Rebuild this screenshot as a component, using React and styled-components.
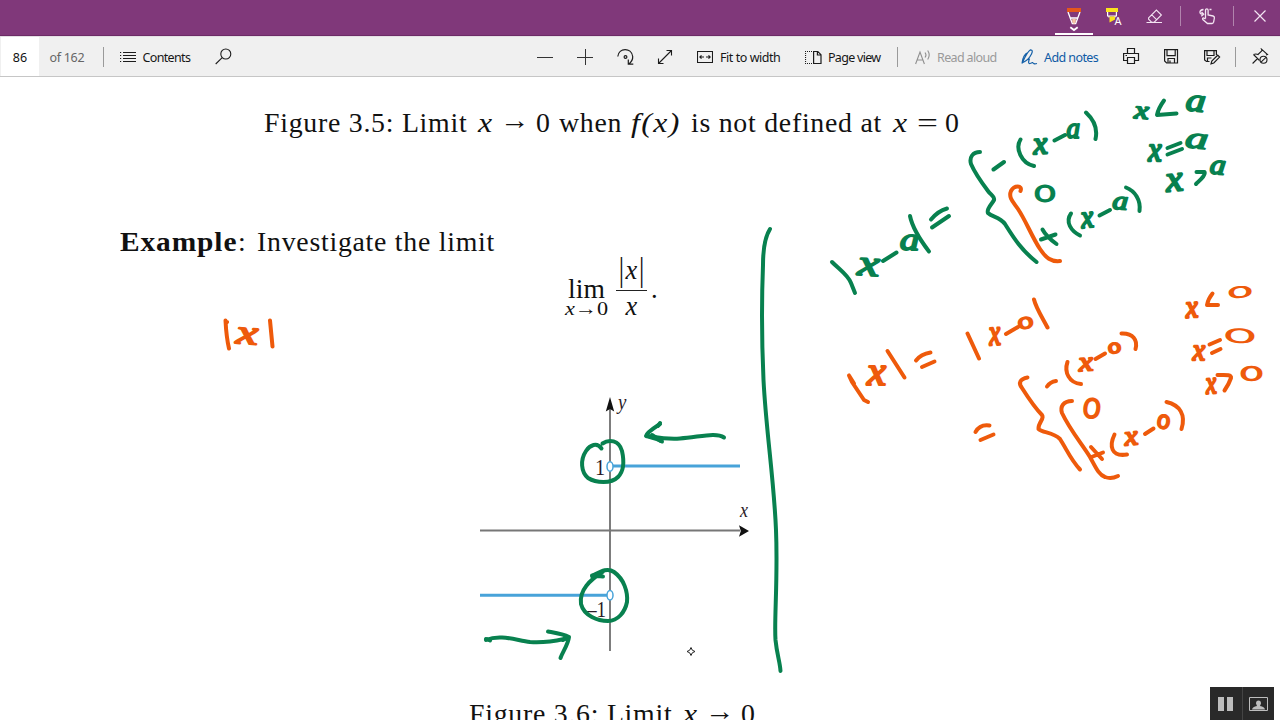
import React from 'react';
import styled, {createGlobalStyle} from 'styled-components';

const GREEN = '#08814f';
const ORANGE = '#ee5a0b';

const GlobalStyle = createGlobalStyle`
  body {
    margin: 0;
    background: #fff;
  }
`;

const Screen = styled.div`
  position: relative;
  display: flex;
  flex-direction: column;
  width: 1280px;
  height: 720px;
  overflow: hidden;
  background: #fff;
  font-family: 'Noto Sans', 'Open Sans', sans-serif;
`;

const InkBar = styled.div`
  box-sizing: border-box;
  flex: none;
  display: flex;
  justify-content: flex-end;
  height: 36px;
  padding-right: 5px;
  background: #80387a;
  border-bottom: 1px solid #6c2b66;
`;

const InkTool = styled.div`
  box-sizing: border-box;
  display: flex;
  justify-content: center;
  width: ${p => p.$width || 40}px;
  height: 35px;
  padding-top: 7px;
`;

const ActiveTool = styled(InkTool)`
  border-bottom: 2px solid #fff;
`;

const InkDivider = styled.div`
  width: 1px;
  height: 20px;
  margin-top: 6px;
  background: #b184ad;
`;

const Toolbar = styled.div`
  box-sizing: border-box;
  flex: none;
  display: flex;
  align-items: center;
  height: 41px;
  background: #f0f0f0;
  border-top: 1px solid #e4dfe4;
  border-bottom: 1px solid #c6c6c6;
`;

const PageField = styled.div`
  width: 38px;
  margin-left: 1px;
  height: 39px;
  line-height: 41px;
  text-align: center;
  background: #fff;
  color: #111;
  font-size: 12.5px;
`;

const Slot = styled.div`
  flex: none;
  display: flex;
  align-items: center;
  width: ${p => p.$width}px;
  margin-left: ${p => p.$gap || 0}px;
`;

const Label = styled(Slot)`
  padding-top: 1px;
  white-space: nowrap;
  font-size: 12.5px;
  letter-spacing: ${p => p.$spacing || -0.6}px;
  color: ${p => p.$color || '#161616'};
`;

const Divider = styled.div`
  flex: none;
  width: 1px;
  height: 20px;
  margin-left: ${p => p.$gap}px;
  background: #9a9a9a;
`;

const Page = styled.main`
  flex: 1;
  display: flex;
  flex-direction: column;
  overflow: hidden;
  color: #111;
  font-family: 'Liberation Serif', serif;
  font-size: 26.5px;
  line-height: 30px;
`;

const Line = styled.div`
  flex: none;
  display: flex;
  height: 30px;
  margin-top: ${p => p.$top}px;
  padding-left: ${p => p.$left}px;
  white-space: nowrap;
`;

const Words = styled.span`
  flex: none;
  width: ${p => p.$width}px;
  letter-spacing: 0.7px;
  transform: scaleX(1.05);
  transform-origin: left;
`;

const Strong = styled(Words)`
  font-weight: bold;
  letter-spacing: 0.8px;
  transform: scaleX(1.11);
`;

const MathText = styled(Words)`
  font-style: ${p => (p.$upright ? 'normal' : 'italic')};
  letter-spacing: ${p => p.$spacing || 0}px;
  transform: scaleX(${p => p.$stretch || 1.2});
`;

const Arrow = styled(MathText)`
  height: 24px;
  line-height: 24px;
`;

const Formula = styled.div`
  flex: none;
  display: flex;
  height: 66px;
  padding-left: 565px;
`;

const Limit = styled.div`
  width: 51px;
  padding-top: 21px;
`;

const LimitName = styled.div`
  height: 22px;
  line-height: 22px;
  padding-left: 3px;
  transform: scaleX(1.04);
  transform-origin: left;
`;

const LimitUnder = styled.div`
  height: 18px;
  font-size: 19px;
  line-height: 18px;
  white-space: nowrap;
  transform: scaleX(1.17);
  transform-origin: left;
`;

const Fraction = styled.div`
  width: 31px;
  text-align: center;
  font-style: italic;
`;

const Numerator = styled.div`
  height: 33px;
  line-height: 27px;
  border-bottom: 1px solid #222;
`;

const Bar = styled.span`
  display: inline-block;
  font-style: normal;
  margin: 0 1.5px;
  transform: scaleY(1.25);
`;

const Period = styled.div`
  padding: 17px 0 0 4px;
`;

const Figure = styled.div`
  flex: none;
  height: 270px;
  margin-top: 66px;
  padding-left: 470px;
`;

const Plot = styled.svg`
  display: block;
`;

const InkLayer = styled.svg`
  position: absolute;
  top: 0;
  left: 0;
  pointer-events: none;
`;

const InkText = styled.text`
  stroke-linejoin: round;
  vector-effect: non-scaling-stroke;
`;

const Recorder = styled.div`
  position: absolute;
  right: 6px;
  bottom: 0;
  display: flex;
  width: 64px;
  height: 33px;
  background: #292929;
`;

const RecorderButton = styled.div`
  box-sizing: border-box;
  width: 32px;
  padding: 10px 0 0 ${p => p.$left}px;
  line-height: 0;
  & + & {
    border-left: 1px solid #444;
  }
`;

const Icon = ({w = 16, h = 16, color = '#1c1c1c', weight = 1, children}) => (
  <svg width={w} height={h} viewBox={`0 0 ${w} ${h}`} fill="none" stroke={color} strokeWidth={weight}>
    {children}
  </svg>
);

const InkTools = () => (
  <InkBar>
    <ActiveTool $width={38}>
      <Icon w={16} h={25} color="#fff" weight={1.3}>
        <path d="M2 5 6.3 16.5H9.7L14 5M4 11h8" />
        <path d="M1 1h14v4H1z" fill="#e4571b" stroke="none" />
        <path d="M6.2 12h3.6v2.5L8 17.5l-1.8-3z" fill="#f6c6a4" stroke="none" />
        <path d="M4.3 20.2l3.7 2.8 3.7-2.8" strokeWidth="1.8" />
      </Icon>
    </ActiveTool>
    <InkTool $width={42}>
      <Icon w={18} h={20} color="#fff" weight={1.2}>
        <path d="M1 1h12v4H1z" fill="#fbe31c" stroke="none" />
        <path d="M2.6 5v4h8.8V5M4 9v1.5M10 9v1.5" />
        <path d="M4.5 9.5h5.5v3l-5.500 3z" fill="#fbe31c" stroke="none" />
        <text x="9.5" y="17.5" fontSize="11" fontFamily="Noto Sans" fill="#fff" stroke="none">A</text>
      </Icon>
    </InkTool>
    <InkTool $width={38}>
      <Icon w={17} h={18} color="#f3e4f2" weight={1.1}>
        <path d="M2.6 10.8 10.4 3 15.4 8 8 15.4H5.8L2.6 12.2zM5.8 7.8l5 5M.5 15.5h15.500" />
      </Icon>
    </InkTool>
    <Slot $width={7} />
    <InkDivider />
    <InkTool $width={52}>
      <Icon w={19} h={18} color="#f3e4f2" weight={1.3}>
        <path d="M7.5 11.5V3.2a1.3 1.3 0 0 1 2.6 0V8l5 1q1.5.4 1.3 2l-.8 4.200q-.3 1.3-1.5 1.3H9.5L4.8 12.5q-.7-1.3.7-1.5l2 1" />
        <path d="M13.5 2.5h-2M5.5 2.5C1 3 .5 7 5.500 7.3M3.5 5l2.200 2.3-2.400 2" />
      </Icon>
    </InkTool>
    <InkDivider />
    <InkTool $width={41}>
      <Slot $width={10} />
      <Icon w={12} h={18} color="#f3e4f2" weight={1.2}>
        <path d="M.5 3.5l11 11M11.5 3.5l-11 11" />
      </Icon>
    </InkTool>
  </InkBar>
);

const ReaderToolbar = () => (
  <Toolbar>
    <PageField>86</PageField>
    <Label $gap={10.5} $width={41.5} $color="#666" $spacing={-0.3}>of 162</Label>
    <Divider $gap={12} />
    <Slot $gap={16} $width={16}>
      <Icon>
        <path d="M3 3.5h13M3 6.5h13M3 9.5h13M3 12.5h13" />
        <path d="M0 3.5h1.2M0 6.5h1.2M0 9.5h1.2M0 12.5h1.2" />
      </Icon>
    </Slot>
    <Label $gap={6.5} $width={48.5} $spacing={-0.65}>Contents</Label>
    <Slot $gap={24} $width={17}>
      <Icon w={17} h={17} weight={1.1}>
        <circle cx="10.8" cy="6" r="5" />
        <path d="M7.2 9.6.7 16" />
      </Icon>
    </Slot>
    <Slot $gap={305} $width={16}>
      <Icon color="#333"><path d="M0 8.5h16" /></Icon>
    </Slot>
    <Slot $gap={24} $width={16}>
      <Icon color="#333"><path d="M0 8.5h16M8.5 0v16" /></Icon>
    </Slot>
    <Slot $gap={24} $width={18}>
      <Icon w={18} h={18} weight={1.2}>
        <path d="M.8 8.5C1.5 -.5 14.5 -1 15.7 8.5Q16 12.5 12 16M11.3 11.5v4.7h5" />
        <circle cx="8.5" cy="9" r="1.4" />
      </Icon>
    </Slot>
    <Slot $gap={22} $width={16}>
      <Icon weight={1.1}>
        <path d="M1.5 14.5l13-13M9.5 1.5h5v5M1.5 9.5v5h5" />
      </Icon>
    </Slot>
    <Slot $gap={24} $width={16}>
      <Icon w={16} h={14} weight={1.1}>
        <path d="M.5 1.5h15v11H.5zM3 7h4M9 7h4M4.5 5.3 2.8 7l1.7 1.7M11.5 5.3 13.2 7l-1.7 1.7" />
      </Icon>
    </Slot>
    <Label $gap={7} $width={61} $spacing={-0.45}>Fit to width</Label>
    <Slot $gap={24} $width={17}>
      <Icon w={17} h={16} weight={1.2}>
        <path d="M8.6 2.5h4.2l3.2 3.2v8.8H8.6zM12.4 2.5V6H16" />
        <path d="M7 2.5H.5v12H7" strokeDasharray="1 1" />
      </Icon>
    </Slot>
    <Label $gap={6} $width={54} $spacing={-0.7}>Page view</Label>
    <Divider $gap={15} />
    <Slot $gap={17} $width={17}>
      <Icon w={17} h={16} color="#8f8f8f" weight={1.1}>
        <path d="M.6 15 5 3l4.4 12M2.2 11h5.7M10 3.5q2 2.5 0 5M12.7 1.5q3 4.5 0 9" />
      </Icon>
    </Slot>
    <Label $gap={5} $width={60} $color="#9a9a9a" $spacing={-0.65}>Read aloud</Label>
    <Slot $gap={24} $width={17}>
      <Icon w={17} h={16} color="#1560a8" weight={1.2}>
        <path d="M1 14.5C3 10 6 3 9.5.8Q12.5 1 10.5 5C8.5 9 5.5 12 2 13.5M7 3.5C3.5 5 1.5 9 1 14.5M8.5 9.5Q6.5 15 9 14.5T11.5 13Q12 15.5 16 14.5" />
      </Icon>
    </Slot>
    <Label $gap={6} $width={55} $color="#0f5aa5" $spacing={-0.58}>Add notes</Label>
    <Slot $gap={24} $width={17}>
      <Icon w={17} h={17} weight={1.2}>
        <path d="M4.5 5.5v-5h7v5M4 12.5H.6v-7h14.9v7H12M4.5 9.5h7v6h-7zM2.5 7.5h1.5" />
      </Icon>
    </Slot>
    <Slot $gap={24} $width={15}>
      <Icon w={15} h={15} weight={1.2}>
        <path d="M.6 .6h12.9v13.4H2.6L.6 12zM3 .6v6h8.2v-6M4 14v-4.5h6.5V14M6 11.5V14" />
      </Icon>
    </Slot>
    <Slot $gap={25} $width={17}>
      <Icon w={17} h={16} weight={1.2}>
        <path d="M5.5 12.5H2.5L.6 11V1.6h11.8V6M3 1.6v4.9h7V1.6M3.5 12.5v-3.5h4" />
        <path d="M7 14.8l.8-2.8 5.9-5.8 1.9 1.9-5.8 5.9z" />
      </Icon>
    </Slot>
    <Divider $gap={14} />
    <Slot $gap={16} $width={17}>
      <Icon w={17} h={17} weight={1.1}>
        <path d="M.6 15.5l5-5M1.5 6.5l6 6M1.5 6.5q2.5-1 4.5 0l4-3.8-.5-1.5L15.5 6.5l-1.5.5" />
        <circle cx="11.5" cy="11.8" r="3.5" />
        <path d="M9 14.2l5-4.8" />
      </Icon>
    </Slot>
  </Toolbar>
);

// Step function graph of |x| / x
const Graph = () => (
  <Plot width="290" height="270" viewBox="470 389 290 270">
    <path d="M610 408V651M480 530.5H740" stroke="#777" strokeWidth="1.9" />
    <path d="M610 397l4.2 14.5-4.2-2.5-4.2 2.5zM749 531l-10-5.8 1.8 5.8-1.8 5.8z" fill="#111" />
    <path d="M613 466H740M480 595.3H607" stroke="#48a3d9" strokeWidth="3" />
    <ellipse cx="610" cy="466.5" rx="3" ry="4.7" fill="#fff" stroke="#48a3d9" strokeWidth="1.5" />
    <ellipse cx="610" cy="595.3" rx="3" ry="4.7" fill="#fff" stroke="#48a3d9" strokeWidth="1.5" />
    <g fontFamily="Liberation Serif" fill="#2b1c28">
      <text transform="translate(618 408.5) scale(.9 1)" fontSize="21" fontStyle="italic">y</text>
      <text transform="translate(740 517) scale(.9 1)" fontSize="20" fontStyle="italic">x</text>
      <text transform="translate(595 474.5) scale(.85 1)" fontSize="24">1</text>
      <text transform="translate(587 616.5) scale(.8 1)" fontSize="24">–1</text>
    </g>
  </Plot>
);

// em boxes of the written characters: left, bottom, width, height
const shapes = {
  x: {font: 'Liberation Serif', style: 'italic', box: [-0.02, 0, 0.46, 0.43], pen: 2.2},
  a: {font: 'Liberation Serif', style: 'italic', box: [0.02, -0.01, 0.48, 0.46], pen: 2},
  0: {font: 'Lato', style: 'normal', box: [0.04, 0, 0.5, 0.72], pen: 3.7},
};

const Written = ({char, cx, cy, w, h, turn = 0, color}) => {
  const {font, style, box, pen} = shapes[char];
  const size = (h - pen) / box[3];
  const stretch = (w - pen) / (box[2] * size);
  return (
    <InkText
      transform={`translate(${cx} ${cy}) rotate(${turn}) scale(${stretch} 1)`}
      x={-(box[0] + box[2] / 2) * size}
      y={(box[1] + box[3] / 2) * size}
      fontFamily={font}
      fontStyle={style}
      fontWeight={char === '0' ? 100 : 400}
      fontSize={size}
      fill={color}
      stroke={color}
      strokeWidth={pen}
    >
      {char}
    </InkText>
  );
};

const greenChars = [
  ['x', 868, 267.5, 25, 18, 4],
  ['a', 910, 243, 21, 17, 0],
  ['x', 1040, 147, 17, 16, -4],
  ['a', 1073.5, 131, 15, 16, 0],
  ['x', 1141, 113, 17, 13, 4],
  ['a', 1196, 104, 21, 17, 6],
  ['x', 1154.5, 154, 16, 17, 0],
  ['a', 1197, 141.5, 24, 16, 6],
  ['x', 1174, 183, 20, 18, -6],
  ['a', 1218, 168, 17, 15, 6],
  ['0', 1045, 193.3, 20, 19, 0],
  ['x', 1087, 220.5, 15, 16, -6],
  ['a', 1120.5, 203.5, 17, 14, 4],
];

const orangeChars = [
  ['x', 246.5, 336.5, 25, 17, 4],
  ['x', 876, 375.7, 22, 20, 0],
  ['x', 994.5, 337, 14, 18, -4],
  ['0', 1025.5, 322.7, 15, 14, -10],
  ['x', 1085.5, 365, 17, 14, -4],
  ['0', 1114.5, 348, 13, 13, -10],
  ['x', 1191.5, 310.5, 15, 16, -4],
  ['0', 1240, 292, 22, 14, -5],
  ['x', 1198.5, 354, 15, 15, 0],
  ['0', 1240, 335.5, 28, 17, 3],
  ['x', 1211, 386.5, 13, 16, -4],
  ['0', 1251.5, 374, 21, 16, 0],
  ['0', 1092, 408, 17, 22, 8],
  ['x', 1131, 439, 16, 14, -6],
  ['0', 1163.5, 421.5, 13, 16, 10],
];

const greenStrokes = [
  // vertical separator
  'M770 229C765 237 763 250 763 265C762 290 761 325 763.5 380C766 430 774 480 776 530C778 580 774 620 775.5 640C777 655 780 662 780.5 671',
  // arrows beside the graph
  'M724 437.5C716 432 700 437 680 438.5C665 439.5 655 437 648 436',
  'M660 424C654 428 647 432 646 436C650 437 655 438 662 441.5',
  'M658 426l2-3M652 435l9 6',
  'M486 640C500 634 515 640 530 642C545 643 555 641 564 639M486 639l4 1.5',
  'M548 631.5C556 633 563 634 569 637C568 645 563 651 560.5 658M563 640l6-3',
  // circled values
  'M601.5 448.5C597 442 590 445 586 451C580 460 581 472 588 478C596 483 611 484 618 477C625 470 624 460 622 451C619 440 609 439 602.5 443.5',
  'M592 575.5L603 576.5M592 576C600 572 607 567 614 572C624 579 628 592 627 602C625 612 618 621 608 621C598 621 584 616 581 604C579 590 590 580 603 571.5',
  // |x - a| =
  'M832 262C840 270 848 275 851 283L855 293',
  'M883 261L896.5 252.5',
  'M910 216C912 226 921 241 929 251.5',
  'M931 219.5Q938 211 947 208.5M932 227.5L949 216',
  'M980 152C973 152 969 157 971 164C974 171 982 183 988 191C991 195 995 197 994 200C992 204 986 209 988 213C992 217 1000 217 1005 224C1012 235 1020 249 1036.5 262',
  // -(x - a)
  'M993.5 169.5L1004 162M1020.5 139.5C1015 148 1021 163 1034 166M1054.5 140.5L1065 135M1086 112.5C1093 119 1098 128 1095.5 139',
  // +(x - a)
  'M1042.5 229.5C1046 236 1051 240 1056.5 244M1041 239.5L1055.5 234.5',
  'M1071 213.5C1065 222 1071 231 1080 235.5M1099.5 215.5L1110 210M1126 187.5C1135 191 1141 200 1139.5 211',
  // x < a, x = a, x > a
  'M1164 100.5C1160 106 1158 110 1157 115L1176.5 113.5',
  'M1167.5 148L1180.5 143M1167.5 154.5L1182 149',
  'M1196.5 172L1204.5 172C1206 175 1200 180 1196 184',
];

const orangeStrokes = [
  'M225.5 320.5C226 330 227 340 229 348.5M270 320.5L272.5 346.5M226 323l1-1',
  'M1020.5 191C1023 185 1014 185 1011 191C1008 198 1014 203 1018 209C1026 221 1032 237 1040 249C1046 258 1051 262 1060 261',
  // |x| = |x - 0|
  'M849 375.5L852 382L864 400L868 402M849 375.5l5 8',
  'M887.5 351L904.5 377.5M916 360.5Q921 354 930.5 352.5M922 367L934.5 361.5',
  'M967.5 333.5L979 358.5M1006 334L1018 327M1034 299.5C1036 308 1042 317 1047.5 327.5',
  'M975.5 432Q980 424 989.5 425.5M980.5 440L993.5 434.5',
  'M1027.5 377.5C1020 379 1018 383 1022 388C1029 399 1036 409 1042 415C1045 419 1038 422 1038.5 429C1043 433 1053 432 1060 439C1067 450 1071 460 1080 469.5',
  // -(x - 0)
  'M1047 386.5Q1050 382 1056 381M1067.5 362C1064 372 1069 383 1081 384M1095.5 359L1105 353.5M1121.5 333.5C1133 333 1138 340 1135.5 349',
  // +(x - 0)
  'M1072 401C1063 401 1060 407 1062 413C1070 430 1082 444 1090 457C1096 468 1099 475 1105 477C1110 479 1114 478 1118 476',
  'M1091 447L1102 459M1091.5 457L1103 452.5',
  'M1114.5 434.5C1109 446 1111 457 1127 454.5M1145 434L1153.5 428.5M1166.5 402C1180 405 1186 415 1181.5 429',
  // x < 0, x = 0, x > 0
  'M1212.5 293.5Q1208 299 1207 305L1218 305',
  'M1209.5 344.5L1220 340M1212 353L1220.5 349',
  'M1217.5 375C1224 375 1232 374 1231 378Q1229 384 1224.5 390.5',
];

const Ink = () => (
  <InkLayer width="1280" height="720" viewBox="0 0 1280 720">
    {[[GREEN, greenStrokes, greenChars], [ORANGE, orangeStrokes, orangeChars]].map(([color, strokes, chars]) => (
      <g key={color}>
        <g fill="none" stroke={color} strokeWidth="4" strokeLinecap="round" strokeLinejoin="round">
          {strokes.map(d => <path key={d} d={d} />)}
        </g>
        {chars.map(([char, cx, cy, w, h, turn]) => (
          <Written key={`${cx}-${cy}`} char={char} cx={cx} cy={cy} w={w} h={h} turn={turn} color={color} />
        ))}
      </g>
    ))}
    {/* pen cursor */}
    <path d="M691 647.5l1.3 2.7 2.7 1.3-2.7 1.3-1.3 2.7-1.3-2.7-2.7-1.3 2.7-1.3z" fill="#fff" stroke="#222" strokeWidth="1" />
  </InkLayer>
);

const App = () => (
  <Screen>
    <GlobalStyle />
    <InkTools />
    <ReaderToolbar />
    <Page>
      <Line $top={31} $left={264}>
        <Words $width={214}>Figure 3.5: Limit</Words>
        <MathText $width={22}>x</MathText>
        <Arrow $width={36} $upright $stretch={1.12}>→</Arrow>
        <Words $width={23}>0</Words>
        <Words $width={72}>when</Words>
        <MathText $width={60} $spacing={1.2}>f(x)</MathText>
        <Words $width={202}>is not defined at</Words>
        <MathText $width={24}>x</MathText>
        <MathText $width={28} $upright $stretch={1.4}>=</MathText>
        <Words $width={20}>0</Words>
      </Line>
      <Line $top={89} $left={120}>
        <Strong $width={118}>Example</Strong>
        <Words $width={19}>:</Words>
        <Words $width={250}>Investigate the limit</Words>
      </Line>
      <Formula>
        <Limit>
          <LimitName>lim</LimitName>
          <LimitUnder><i>x</i>→0</LimitUnder>
        </Limit>
        <Fraction>
          <Numerator><Bar>|</Bar>x<Bar>|</Bar></Numerator>
          x
        </Fraction>
        <Period>.</Period>
      </Formula>
      <Figure><Graph /></Figure>
      <Line $top={40} $left={469}>
        <Words $width={214}>Figure 3.6: Limit</Words>
        <MathText $width={22}>x</MathText>
        <Arrow $width={36} $upright $stretch={1.12}>→</Arrow>
        <Words $width={23}>0</Words>
      </Line>
    </Page>
    <Ink />
    <Recorder>
      <RecorderButton $left={8}>
        <Icon w={16} h={14}><path d="M0 0h6v14H0zM9 0h6v14H9z" fill="#bdbdbd" stroke="none" /></Icon>
      </RecorderButton>
      <RecorderButton $left={6}>
        <Icon w={19} h={14} color="#bdbdbd">
          <path d="M.5 .5h18v13H.5z" />
          <path d="M3 12.5Q3.5 9.5 8 9L7 6.5Q7 3.5 9.5 3.5T12 6.5L11 9Q15.5 9.5 16 12.5z" fill="#bdbdbd" stroke="none" />
        </Icon>
      </RecorderButton>
    </Recorder>
  </Screen>
);

export default App;
